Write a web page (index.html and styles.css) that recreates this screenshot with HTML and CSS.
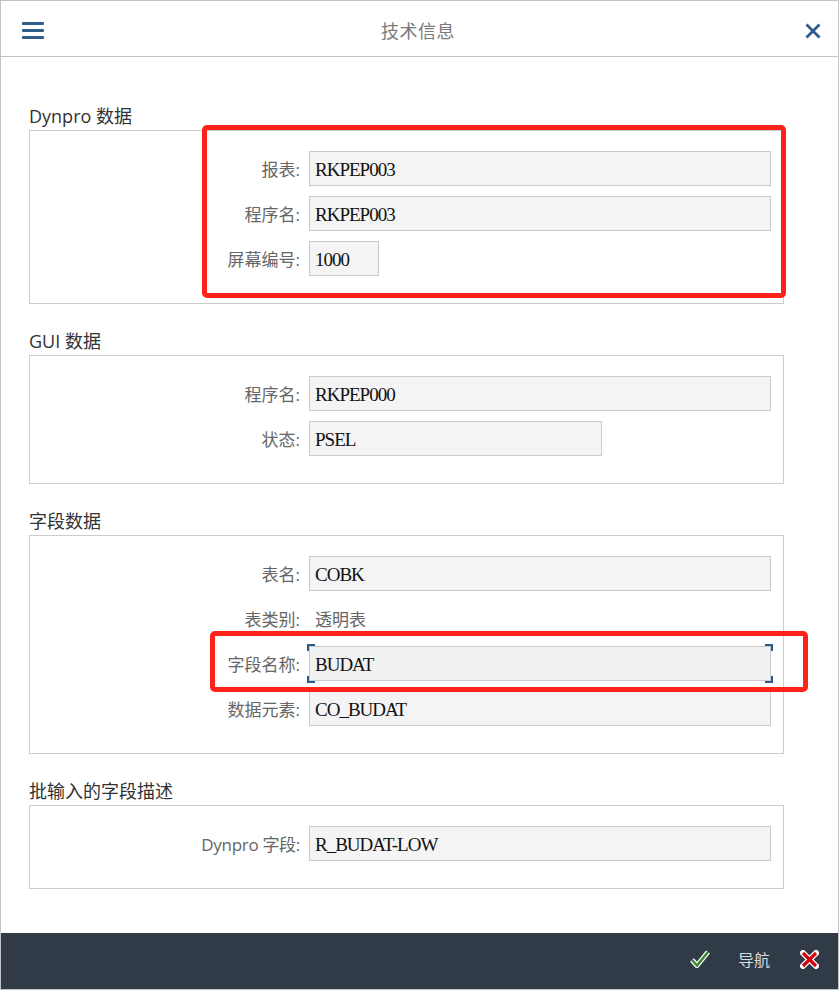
FILE: index.html
```html
<!DOCTYPE html>
<html lang="zh">
<head>
  <meta charset="UTF-8" />
  <meta name="viewport" content="width=device-width, initial-scale=1.0"/>
  <title>技术信息</title>
  <link rel="stylesheet" href="styles.css">
</head>
<body>

  <div class="window">
    <header class="titlebar">
      <button class="icon-btn" title="菜单">
        <svg width="22" height="17" viewBox="0 0 22 17">
          <rect x="0" y="0" width="22" height="3" rx="1" fill="#2f5d8a"/>
          <rect x="0" y="7" width="22" height="3" rx="1" fill="#2f5d8a"/>
          <rect x="0" y="14" width="22" height="3" rx="1" fill="#2f5d8a"/>
        </svg>
      </button>
      <div class="title">技术信息</div>
      <button class="icon-btn close" title="关闭">
        <svg width="16" height="16" viewBox="0 0 16 16">
          <path d="M1.5 1.5 L14.5 14.5 M14.5 1.5 L1.5 14.5" stroke="#2f5d8a" stroke-width="2.8" fill="none"/>
        </svg>
      </button>
    </header>

    <main class="content">
      <section class="group">
        <h2 class="group-title">Dynpro 数据</h2>
        <div class="group-box">
          <div class="row"><label>报表:</label><input class="field" readonly value="RKPEP003"></div>
          <div class="row"><label>程序名:</label><input class="field" readonly value="RKPEP003"></div>
          <div class="row"><label>屏幕编号:</label><input class="field short" readonly value="1000"></div>
        </div>
      </section>

      <section class="group">
        <h2 class="group-title">GUI 数据</h2>
        <div class="group-box">
          <div class="row"><label>程序名:</label><input class="field" readonly value="RKPEP000"></div>
          <div class="row"><label>状态:</label><input class="field mid" readonly value="PSEL"></div>
        </div>
      </section>

      <section class="group">
        <h2 class="group-title">字段数据</h2>
        <div class="group-box">
          <div class="row"><label>表名:</label><input class="field" readonly value="COBK"></div>
          <div class="row"><label>表类别:</label><span class="value">透明表</span></div>
          <div class="row"><label>字段名称:</label><div class="focus-ring"><input class="field focused" readonly value="BUDAT"></div></div>
          <div class="row"><label>数据元素:</label><input class="field" readonly value="CO_BUDAT"></div>
        </div>
      </section>

      <section class="group">
        <h2 class="group-title">批输入的字段描述</h2>
        <div class="group-box">
          <div class="row"><label class="latin">Dynpro 字段:</label><input class="field" readonly value="R_BUDAT-LOW"></div>
        </div>
      </section>
    </main>

    <footer class="toolbar">
      <button class="tool-btn" title="确定">
        <svg width="20" height="18" viewBox="0 0 20 18">
          <path d="M2 10 L7 15.5 L18 2" stroke="#fff" stroke-width="5" fill="none" stroke-linejoin="round"/>
          <path d="M2 10 L7 15.5 L18 2" stroke="#3c8a34" stroke-width="2.6" fill="none"/>
        </svg>
      </button>
      <button class="tool-btn text">导航</button>
      <button class="tool-btn" title="取消">
        <svg width="19" height="19" viewBox="0 0 19 19">
          <path d="M3 3 L16 16 M16 3 L3 16" stroke="#fff" stroke-width="6" fill="none" stroke-linecap="round"/>
          <path d="M3 3 L16 16 M16 3 L3 16" stroke="#d4000e" stroke-width="3.2" fill="none"/>
        </svg>
      </button>
    </footer>

    <div class="mark mark-dynpro"></div>
    <div class="mark mark-field"></div>
  </div>

</body>
</html>
```

FILE: styles.css
```css
body {
  margin: 0;
  font-family: "Open Sans", "Noto Sans CJK SC", sans-serif;
  background: #fff;
  color: #333;
}
.window {
  position: relative;
  height: 990px;
  box-sizing: border-box;
  border: 1px solid #c2c4c8;
  display: flex;
  flex-direction: column;
}
.titlebar {
  height: 56px;
  border-bottom: 1px solid #c2c4c8;
  display: grid;
  grid-template-columns: 1fr auto 1fr;
  align-items: center;
  padding: 4px 17px 0 21px;
  box-sizing: border-box;
  flex-shrink: 0;
}
.icon-btn {
  background: none;
  border: none;
  padding: 0;
  display: flex;
  cursor: pointer;
  justify-self: start;
}
.icon-btn.close {
  justify-self: end;
}
.title {
  font-family: "Noto Sans CJK SC", sans-serif;
  font-size: 18px;
  color: #7a7a7a;
  letter-spacing: 0.5px;
  margin-right: 7px;
  margin-top: -2px;
}
.content {
  flex: 1;
  padding: 49px 54px 0 28px;
}
.group + .group {
  margin-top: 27px;
}
.group-title {
  margin: 0;
  height: 24px;
  font-size: 18px;
  line-height: 20px;
  font-weight: normal;
  color: #333;
}
.group-box {
  border: 1px solid #cccccc;
  padding: 20px 12px 27px 0;
  display: flex;
  flex-direction: column;
  gap: 10px;
}
.row {
  display: grid;
  grid-template-columns: 270px 1fr;
  column-gap: 9px;
  align-items: center;
  height: 35px;
}
.row label {
  text-align: right;
  font-size: 17px;
  color: #666;
}
.row label.latin {
  letter-spacing: -0.3px;
}
.value {
  font-family: "Noto Sans CJK SC", sans-serif;
  font-size: 17px;
  color: #666;
  padding-left: 6px;
}
.field {
  height: 35px;
  width: 100%;
  box-sizing: border-box;
  border: 1px solid #cbcbcb;
  background: #f4f4f4;
  padding: 2px 5px 0;
  margin: 0;
  font-family: "Liberation Serif", serif;
  font-size: 19px;
  letter-spacing: -1px;
  color: #111;
  outline: none;
  border-radius: 0;
}
.field.short {
  width: 70px;
}
.field.mid {
  width: 293px;
}
.field.focused {
  background: #f1f1f1;
}
.focus-ring {
  position: relative;
  height: 35px;
}
.focus-ring::after {
  content: "";
  position: absolute;
  top: -2px;
  bottom: -2px;
  left: -2px;
  right: -2px;
  pointer-events: none;
  background:
    linear-gradient(#2b5b8c, #2b5b8c) left top / 8px 2px no-repeat,
    linear-gradient(#2b5b8c, #2b5b8c) left top / 2px 7px no-repeat,
    linear-gradient(#2b5b8c, #2b5b8c) left bottom / 8px 2px no-repeat,
    linear-gradient(#2b5b8c, #2b5b8c) left bottom / 2px 7px no-repeat,
    linear-gradient(#2b5b8c, #2b5b8c) right top / 8px 2px no-repeat,
    linear-gradient(#2b5b8c, #2b5b8c) right top / 2px 7px no-repeat,
    linear-gradient(#2b5b8c, #2b5b8c) right bottom / 8px 2px no-repeat,
    linear-gradient(#2b5b8c, #2b5b8c) right bottom / 2px 7px no-repeat;
}
.toolbar {
  height: 56px;
  flex-shrink: 0;
  background: #303b47;
  display: flex;
  justify-content: flex-end;
  align-items: center;
  padding: 0 19px 4px 0;
  box-sizing: border-box;
}
.tool-btn {
  background: none;
  border: none;
  padding: 0;
  display: flex;
  cursor: pointer;
}
.tool-btn.text {
  font-family: "Noto Sans CJK SC", sans-serif;
  font-size: 16px;
  color: #d3dbe3;
  margin: 0 30px 0 28px;
}
.mark {
  position: absolute;
  box-sizing: border-box;
  border: 5px solid #ff2218;
  border-radius: 5px;
  pointer-events: none;
}
.mark-dynpro {
  left: 201px;
  top: 124px;
  width: 584px;
  height: 173px;
}
.mark-field {
  left: 209px;
  top: 630px;
  width: 598px;
  height: 61px;
}
```
